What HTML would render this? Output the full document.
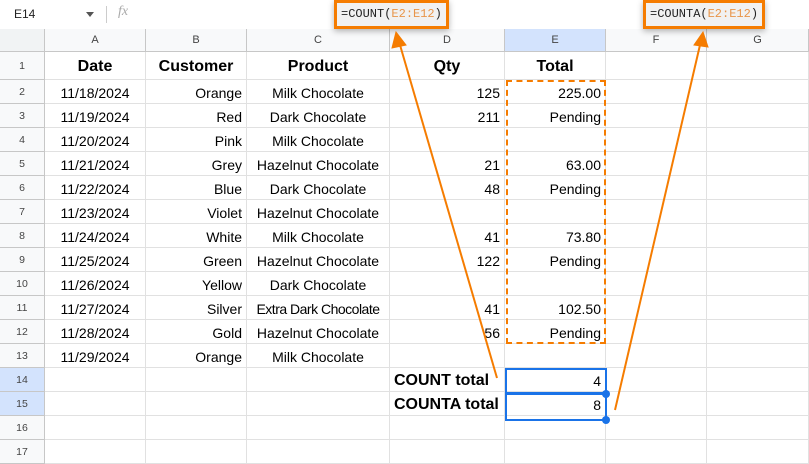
<!DOCTYPE html>
<html><head><style>
body{margin:0;width:809px;height:464px;overflow:hidden;background:#fff;font-family:"Liberation Sans",sans-serif;position:relative}
.fb{position:absolute;left:0;top:0;width:809px;height:29px;border-bottom:1px solid #c7c7c7;background:#fff}
.cell{position:absolute;box-sizing:border-box;border-right:1px solid #e1e1e1;border-bottom:1px solid #e1e1e1;font-size:14px;color:#000;white-space:nowrap;overflow:visible;padding:2px 4px 0 4px}
.ch{position:absolute;top:29px;height:23px;box-sizing:border-box;border-right:1px solid #c7c7c7;border-bottom:1px solid #c7c7c7;background:#f8f9fa;font-size:11px;color:#444;text-align:center;line-height:23px}
.rh{position:absolute;left:0;width:45px;box-sizing:border-box;border-right:1px solid #c7c7c7;border-bottom:1px solid #c7c7c7;background:#f8f9fa;font-size:10.5px;color:#444;text-align:center}
.r{text-align:right}.c{text-align:center}.b{font-weight:bold;font-size:16px}
.box{position:absolute;border:3px solid #f57c00;background:#f1f1f1;font-family:"Liberation Mono",monospace;font-size:12px;line-height:22px;padding:0 4px;box-shadow:0 2px 6px rgba(0,0,0,.3);color:#222}
.box span{color:#e8954a}
</style></head><body>
<div class="fb">
<div style="position:absolute;left:14px;top:7px;font-size:12px;color:#222">E14</div>
<div style="position:absolute;left:86px;top:12px;border-left:4px solid transparent;border-right:4px solid transparent;border-top:5px solid #555"></div>
<div style="position:absolute;left:106px;top:6px;width:1px;height:17px;background:#ccc"></div>
<div style="position:absolute;left:118px;top:4px;font-size:14px;color:#aaa;font-style:italic;font-family:'Liberation Serif',serif">fx</div>
</div>
<div class="ch" style="left:0;width:45px;background:#f1f3f4"></div>
<div class="ch" style="left:45px;width:101px">A</div>
<div class="ch" style="left:146px;width:101px">B</div>
<div class="ch" style="left:247px;width:143px">C</div>
<div class="ch" style="left:390px;width:115px">D</div>
<div class="ch" style="left:505px;width:101px;background:#d3e3fd">E</div>
<div class="ch" style="left:606px;width:101px">F</div>
<div class="ch" style="left:707px;width:102px">G</div>
<div id="g"></div>
<script>
(function(){
var cols=[45,146,247,390,505,606,707,809];
var data=[
["Date","Customer","Product","Qty","Total"],
["11/18/2024","Orange","Milk Chocolate","125","225.00"],
["11/19/2024","Red","Dark Chocolate","211","Pending"],
["11/20/2024","Pink","Milk Chocolate","",""],
["11/21/2024","Grey","Hazelnut Chocolate","21","63.00"],
["11/22/2024","Blue","Dark Chocolate","48","Pending"],
["11/23/2024","Violet","Hazelnut Chocolate","",""],
["11/24/2024","White","Milk Chocolate","41","73.80"],
["11/25/2024","Green","Hazelnut Chocolate","122","Pending"],
["11/26/2024","Yellow","Dark Chocolate","",""],
["11/27/2024","Silver","Extra Dark Chocolate","41","102.50"],
["11/28/2024","Gold","Hazelnut Chocolate","56","Pending"],
["11/29/2024","Orange","Milk Chocolate","",""],
["","","","COUNT total","4"],
["","","","COUNTA total","8"],
["","","","",""],["","","","",""]];
var h="";
for(var i=0;i<17;i++){
 var yy=i==0?52:80+(i-1)*24, ht=i==0?28:24;
 var sel=(i==13||i==14);
 h+='<div class="rh" style="top:'+yy+'px;height:'+ht+'px;line-height:'+ht+'px;'+(sel?'background:#d3e3fd;':'')+'">'+(i+1)+'</div>';
 for(var j=0;j<7;j++){
  var t=j<5?data[i][j]:"", cls="cell";
  if(i==0)cls+=" b c";
  else if(j==0||j==2)cls+=" c";
  else cls+=" r";
  if(i>=13&&j==3)cls="cell b";
  var sty='left:'+cols[j]+'px;top:'+yy+'px;width:'+(cols[j+1]-cols[j])+'px;height:'+ht+'px;line-height:'+(ht-2)+'px;';
  if(i==10&&j==2)sty+='letter-spacing:-0.5px;padding:2px 0 0 0;';
  h+='<div class="'+cls+'" style="'+sty+'">'+t+'</div>';
 }
}
document.getElementById('g').outerHTML=h;
})();
</script>
<div style="position:absolute;left:506px;top:80px;width:96px;height:260px;border:2px dashed #f57c00"></div>
<div style="position:absolute;left:505px;top:368px;width:98px;height:22px;border:2px solid #1a73e8"></div>
<div style="position:absolute;left:505px;top:393px;width:98px;height:24px;border:2px solid #1a73e8"></div>
<div style="position:absolute;left:602px;top:390px;width:8px;height:8px;border-radius:50%;background:#1a73e8"></div>
<div style="position:absolute;left:602px;top:416px;width:8px;height:8px;border-radius:50%;background:#1a73e8"></div>
<div class="box" style="left:334px;top:0;height:23px">=COUNT(<span>E2:E12</span>)</div>
<div class="box" style="left:643px;top:0;height:23px">=COUNTA(<span>E2:E12</span>)</div>
<svg style="position:absolute;left:0;top:0" width="809" height="464">
<g stroke="#f57c00" stroke-width="2" fill="#f57c00">
<line x1="497" y1="378" x2="400" y2="45"/>
<polygon points="396,32 392,48 406,45" stroke-width="1"/>
<line x1="615" y1="410" x2="700" y2="45"/>
<polygon points="703,32 694,45 708,47" stroke-width="1"/>
</g></svg>
</body></html>
